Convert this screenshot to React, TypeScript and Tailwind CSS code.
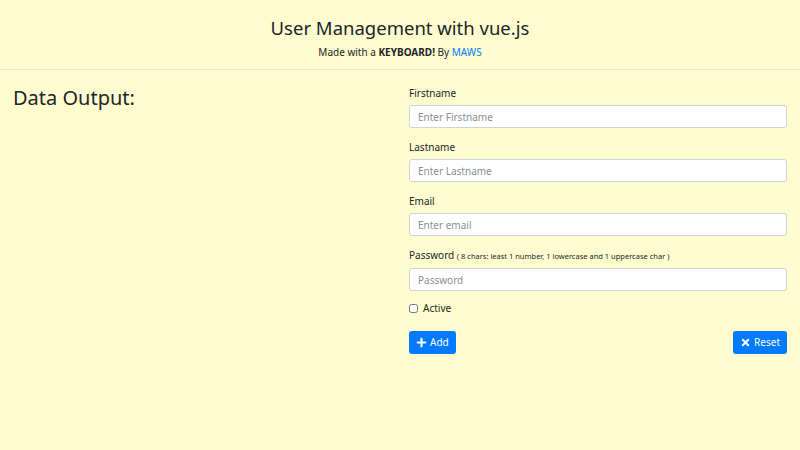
import { FaPlus, FaTimes } from 'react-icons/fa';

const fields = [
  { label: 'Firstname', placeholder: 'Enter Firstname', type: 'text' },
  { label: 'Lastname', placeholder: 'Enter Lastname', type: 'text' },
  { label: 'Email', placeholder: 'Enter email', type: 'email' },
];

export default function App() {
  return (
    <div className="min-h-[450px] w-full bg-[#fffdd0] text-[#212529] font-['Noto_Sans','Open_Sans',sans-serif]">
      {/* Header */}
      <header className="flex flex-col items-center border-b border-[#e9e7c2] pt-[15px] pb-[10px]">
        <h1 className="text-[18.5px] leading-[26px] font-normal">User Management with vue.js</h1>
        <p className="mt-[4px] text-[10px] leading-[14px]">
          Made with a <b className="font-bold">KEYBOARD!</b> By <span className="text-[#007bff]">MAWS</span>
        </p>
      </header>

      <div className="flex">
        {/* Output */}
        <div className="w-1/2 pl-[13px] pt-[14px]">
          <h2 className="text-[20px] leading-[28px]">Data Output:</h2>
        </div>

        {/* Form */}
        <div className="w-1/2 pl-[9px] pr-[13px] pt-[16px]">
          {fields.map((f) => (
            <div key={f.label} className="mb-[12px]">
              <label className="block text-[10px] leading-[14px] mb-[5px]">{f.label}</label>
              <input
                type={f.type}
                placeholder={f.placeholder}
                className="block w-full h-[23px] px-[8px] text-[10px] bg-white border border-[#ced4da] rounded-[3px] placeholder:text-[#8a9096] outline-none"
              />
            </div>
          ))}
          <div className="mb-[10px]">
            <label className="block text-[10px] leading-[14px] mb-[5px]">
              Password <span className="text-[7.5px]">( 8 chars: least 1 number, 1 lowercase and 1 uppercase char )</span>
            </label>
            <input
              type="password"
              placeholder="Password"
              className="block w-full h-[23px] px-[8px] text-[10px] bg-white border border-[#ced4da] rounded-[3px] placeholder:text-[#8a9096] outline-none"
            />
          </div>
          <label className="flex items-center gap-[5px] text-[10px] leading-[14px]">
            <input type="checkbox" className="w-[9px] h-[9px]" />
            Active
          </label>
          <div className="flex justify-between mt-[16px]">
            <button className="flex items-center gap-[3px] h-[23px] px-[7px] bg-[#007bff] text-white text-[10px] rounded-[3px]">
              <FaPlus className="w-[11px] h-[11px]" /> Add
            </button>
            <button className="flex items-center gap-[3px] h-[23px] px-[7px] bg-[#007bff] text-white text-[10px] rounded-[3px]">
              <FaTimes className="w-[11px] h-[11px]" /> Reset
            </button>
          </div>
        </div>
      </div>
    </div>
  );
}
